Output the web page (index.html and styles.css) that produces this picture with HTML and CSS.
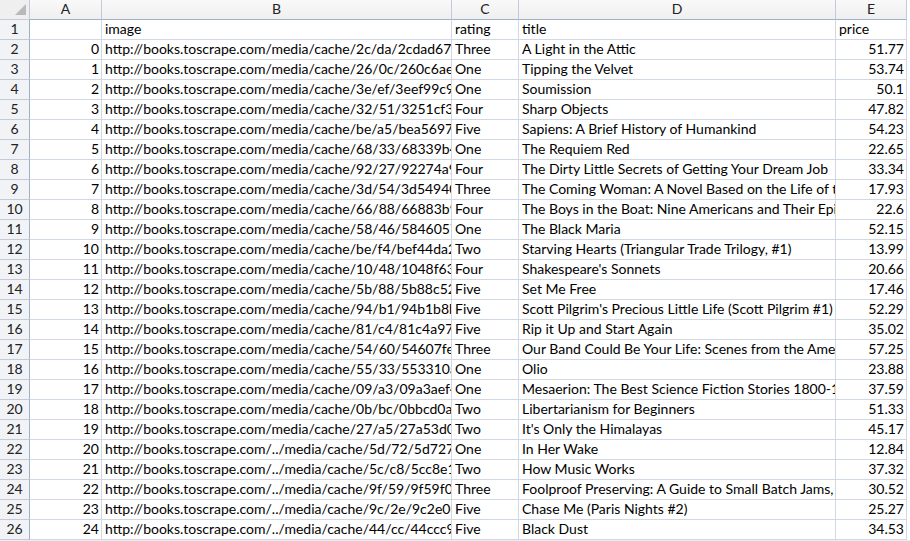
FILE: index.html
```html
<!DOCTYPE html>
<html>
<head>
<meta charset="utf-8">
<link rel="stylesheet" href="styles.css">
</head>
<body>
<div class="sheet" id="sheet">
  <div class="hd corner"><span class="tri"></span></div>
  <div class="hd col">A</div>
  <div class="hd col">B</div>
  <div class="hd col">C</div>
  <div class="hd col">D</div>
  <div class="hd col">E</div>

  <div class="hd row">1</div><div class="c"></div><div class="c">image</div><div class="c">rating</div><div class="c">title</div><div class="c">price</div>
  <div class="hd row">2</div><div class="c n">0</div><div class="c">http://books.toscrape.com/media/cache/2c/da/2cdad67c44b002e7ead0cc35693c0e8b.jpg</div><div class="c">Three</div><div class="c">A Light in the Attic</div><div class="c n">51.77</div>
  <div class="hd row">3</div><div class="c n">1</div><div class="c">http://books.toscrape.com/media/cache/26/0c/260c6ae16bce31c8f8c95daddd9f4a1c.jpg</div><div class="c">One</div><div class="c">Tipping the Velvet</div><div class="c n">53.74</div>
  <div class="hd row">4</div><div class="c n">2</div><div class="c">http://books.toscrape.com/media/cache/3e/ef/3eef99c9d9adef34639f510662022830.jpg</div><div class="c">One</div><div class="c">Soumission</div><div class="c n">50.1</div>
  <div class="hd row">5</div><div class="c n">3</div><div class="c">http://books.toscrape.com/media/cache/32/51/3251cf3a3412f53f339e42cac2134093.jpg</div><div class="c">Four</div><div class="c">Sharp Objects</div><div class="c n">47.82</div>
  <div class="hd row">6</div><div class="c n">4</div><div class="c">http://books.toscrape.com/media/cache/be/a5/bea5697f2534a2f86a3ef27b5a8c12a6.jpg</div><div class="c">Five</div><div class="c">Sapiens: A Brief History of Humankind</div><div class="c n">54.23</div>
  <div class="hd row">7</div><div class="c n">5</div><div class="c">http://books.toscrape.com/media/cache/68/33/68339b4c9bc034267e1da611ab3b34f8.jpg</div><div class="c">One</div><div class="c">The Requiem Red</div><div class="c n">22.65</div>
  <div class="hd row">8</div><div class="c n">6</div><div class="c">http://books.toscrape.com/media/cache/92/27/92274a95b7c251fea59a2b8a78275ab4.jpg</div><div class="c">Four</div><div class="c">The Dirty Little Secrets of Getting Your Dream Job</div><div class="c n">33.34</div>
  <div class="hd row">9</div><div class="c n">7</div><div class="c">http://books.toscrape.com/media/cache/3d/54/3d54940e57e662c4dd1f3ff00c78cc64.jpg</div><div class="c">Three</div><div class="c">The Coming Woman: A Novel Based on the Life of the Infamous Feminist, Victoria Woodhull</div><div class="c n">17.93</div>
  <div class="hd row">10</div><div class="c n">8</div><div class="c">http://books.toscrape.com/media/cache/66/88/66883b91f6804b2323c8369331cb7dd1.jpg</div><div class="c">Four</div><div class="c">The Boys in the Boat: Nine Americans and Their Epic Quest for Gold at the 1936 Berlin Olympics</div><div class="c n">22.6</div>
  <div class="hd row">11</div><div class="c n">9</div><div class="c">http://books.toscrape.com/media/cache/58/46/5846057e28022268153beff6d352b06c.jpg</div><div class="c">One</div><div class="c">The Black Maria</div><div class="c n">52.15</div>
  <div class="hd row">12</div><div class="c n">10</div><div class="c">http://books.toscrape.com/media/cache/be/f4/bef44da28c98f905a3ebec0b87be8530.jpg</div><div class="c">Two</div><div class="c">Starving Hearts (Triangular Trade Trilogy, #1)</div><div class="c n">13.99</div>
  <div class="hd row">13</div><div class="c n">11</div><div class="c">http://books.toscrape.com/media/cache/10/48/1048f63d3b5061cd2f424d20b3f9b666.jpg</div><div class="c">Four</div><div class="c">Shakespeare's Sonnets</div><div class="c n">20.66</div>
  <div class="hd row">14</div><div class="c n">12</div><div class="c">http://books.toscrape.com/media/cache/5b/88/5b88c52633f53cacf162c15f4f823153.jpg</div><div class="c">Five</div><div class="c">Set Me Free</div><div class="c n">17.46</div>
  <div class="hd row">15</div><div class="c n">13</div><div class="c">http://books.toscrape.com/media/cache/94/b1/94b1b8b244bce9677c2f29ccc890d4d2.jpg</div><div class="c">Five</div><div class="c">Scott Pilgrim's Precious Little Life (Scott Pilgrim #1)</div><div class="c n">52.29</div>
  <div class="hd row">16</div><div class="c n">14</div><div class="c">http://books.toscrape.com/media/cache/81/c4/81c4a973364e17d01f217e1188253d5e.jpg</div><div class="c">Five</div><div class="c">Rip it Up and Start Again</div><div class="c n">35.02</div>
  <div class="hd row">17</div><div class="c n">15</div><div class="c">http://books.toscrape.com/media/cache/54/60/54607fe8945897cdcced0044103b10b6.jpg</div><div class="c">Three</div><div class="c">Our Band Could Be Your Life: Scenes from the American Indie Underground, 1981-1991</div><div class="c n">57.25</div>
  <div class="hd row">18</div><div class="c n">16</div><div class="c">http://books.toscrape.com/media/cache/55/33/553310a7162dfbc2c6d19a84da0df9e1.jpg</div><div class="c">One</div><div class="c">Olio</div><div class="c n">23.88</div>
  <div class="hd row">19</div><div class="c n">17</div><div class="c">http://books.toscrape.com/media/cache/09/a3/09a3aef48557576e1a85ba7efea8ecb7.jpg</div><div class="c">One</div><div class="c">Mesaerion: The Best Science Fiction Stories 1800-1849</div><div class="c n">37.59</div>
  <div class="hd row">20</div><div class="c n">18</div><div class="c">http://books.toscrape.com/media/cache/0b/bc/0bbcd0a6f4bcd81ccb1049a52736406e.jpg</div><div class="c">Two</div><div class="c">Libertarianism for Beginners</div><div class="c n">51.33</div>
  <div class="hd row">21</div><div class="c n">19</div><div class="c">http://books.toscrape.com/media/cache/27/a5/27a53d0bb95bdd88288eaf66c9230d7e.jpg</div><div class="c">Two</div><div class="c">It's Only the Himalayas</div><div class="c n">45.17</div>
  <div class="hd row">22</div><div class="c n">20</div><div class="c">http://books.toscrape.com/../media/cache/5d/72/5d72709c6a7a9584a4d1cf07648bfce1.jpg</div><div class="c">One</div><div class="c">In Her Wake</div><div class="c n">12.84</div>
  <div class="hd row">23</div><div class="c n">21</div><div class="c">http://books.toscrape.com/../media/cache/5c/c8/5cc8e107246cb478960d4f0aba1e1c8e.jpg</div><div class="c">Two</div><div class="c">How Music Works</div><div class="c n">37.32</div>
  <div class="hd row">24</div><div class="c n">22</div><div class="c">http://books.toscrape.com/../media/cache/9f/59/9f59f01fa916a7bb8f0b28a4012179a4.jpg</div><div class="c">Three</div><div class="c">Foolproof Preserving: A Guide to Small Batch Jams, Jellies, Pickles, Condiments, and More</div><div class="c n">30.52</div>
  <div class="hd row">25</div><div class="c n">23</div><div class="c">http://books.toscrape.com/../media/cache/9c/2e/9c2e0eb8866b8e3f3b768994fd3d1c1a.jpg</div><div class="c">Five</div><div class="c">Chase Me (Paris Nights #2)</div><div class="c n">25.27</div>
  <div class="hd row">26</div><div class="c n">24</div><div class="c">http://books.toscrape.com/../media/cache/44/cc/44ccc99c8f82c33d4f9d2afa4ef25787.jpg</div><div class="c">Five</div><div class="c">Black Dust</div><div class="c n">34.53</div>
</div>
<div class="bottom"></div>
</body>
</html>
```
FILE: styles.css
```css
html, body {
  margin: 0;
  padding: 0;
  background: #ffffff;
}
body {
  width: 910px;
  height: 541px;
  overflow: hidden;
  font-family: Lato, "Liberation Sans", sans-serif;
  font-size: 14px;
  color: #000;
}
.sheet {
  display: grid;
  grid-template-columns: 30px 72px 350px 67px 317px 71px;
  grid-auto-rows: 20px;
}
.sheet > div {
  box-sizing: border-box;
  border-right: 1px solid #d0d7e5;
  border-bottom: 1px solid #d0d7e5;
  overflow: hidden;
  white-space: nowrap;
  line-height: 18px;
}
.hd {
  background: #f4f6f9;
  color: #222;
  text-align: center;
  border-color: #c5cbd6 !important;
}
.hd.col {
  background: linear-gradient(#f9f9f9, #efefef);
  border-bottom-color: #9eb1c9 !important;
}
.hd.row {
  background: #f1f3f7;
  border-right-color: #9eb1c9 !important;
}
.corner {
  position: relative;
  background: #efefef !important;
}
.tri {
  position: absolute;
  right: 3px;
  bottom: 4px;
  width: 0;
  height: 0;
  border-left: 11px solid transparent;
  border-bottom: 11px solid #b9b9b9;
}
.c {
  padding: 0 2px 0 3px;
}
.c.n {
  text-align: right;
}
.bottom {
  height: 2px;
  background: #e9ecf0;
}
```
